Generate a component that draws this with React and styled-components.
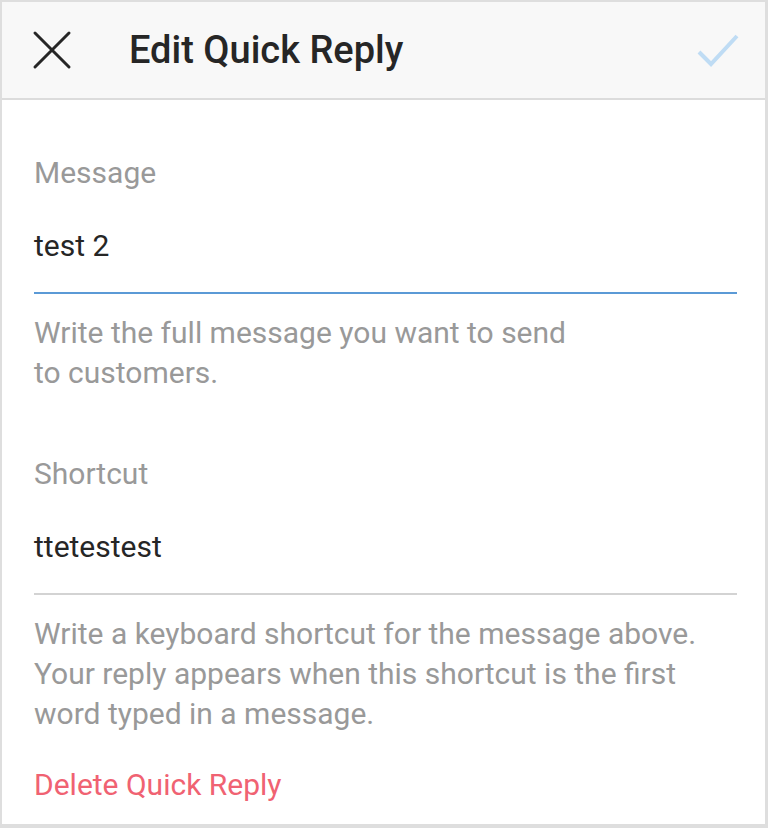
import * as React from 'react';
import styled, { createGlobalStyle } from 'styled-components';

const GlobalStyle = createGlobalStyle`
  html, body {
    margin: 0;
    padding: 0;
    background: #ffffff;
  }
  body {
    font-family: Roboto, 'Liberation Sans', sans-serif;
    -webkit-font-smoothing: antialiased;
  }
`;

const SScreen = styled.div`
  box-sizing: border-box;
  width: 768px;
  height: 828px;
  border: 2px solid #dedede;
  border-right-width: 3px;
  border-bottom-width: 4px;
  background: #ffffff;
  display: flex;
  flex-direction: column;
  overflow: hidden;
`;

const SHeader = styled.div`
  height: 96px;
  flex-shrink: 0;
  display: flex;
  align-items: center;
  background: #f8f8f8;
  border-bottom: 2px solid #dcdcdc;
  padding: 0 24px 0 30px;
`;

const SIconButton = styled.button`
  border: 0;
  background: none;
  padding: 0;
  display: flex;
  align-items: center;
  justify-content: center;
  width: ${({ size }) => size}px;
  height: ${({ size }) => size}px;
  cursor: pointer;
`;

const STitle = styled.h1`
  flex: 1;
  margin: 0 0 0 57px;
  font-size: 38px;
  font-weight: 500;
  color: #262626;
`;

const SBody = styled.div`
  padding: 0 28px 0 32px;
  display: flex;
  flex-direction: column;
`;

const SField = styled.div`
  display: flex;
  flex-direction: column;
  padding-top: ${({ first }) => (first ? 53 : 61)}px;
`;

const SLabel = styled.label`
  font-size: 30px;
  line-height: 40px;
  color: #999999;
`;

const SInput = styled.div`
  margin-top: 33px;
  font-size: 30px;
  line-height: 40px;
  color: #262626;
  padding-bottom: 26px;
  border-bottom: 2px solid ${({ focused }) => (focused ? '#5b9ad6' : '#d3d3d3')};
`;

const SHelp = styled.p`
  margin: 19px 0 0;
  font-size: 30px;
  line-height: 40px;
  color: #999999;
`;

const SDelete = styled.button`
  align-self: flex-start;
  margin-top: 31px;
  border: 0;
  background: none;
  padding: 0;
  font-family: inherit;
  font-size: 30px;
  line-height: 40px;
  color: #f06272;
  cursor: pointer;
`;

const CloseIcon = () => (
  <svg width="40" height="40" viewBox="0 0 40 40">
    <path
      d="M3 3 L37 37 M37 3 L3 37"
      stroke="#262626"
      strokeWidth="3"
      strokeLinecap="round"
      fill="none"
    />
  </svg>
);

const CheckIcon = () => (
  <svg width="48" height="40" viewBox="0 0 48 40">
    <path
      d="M6 22 L18 34 L44 6"
      stroke="#bfdcf4"
      strokeWidth="4"
      fill="none"
    />
  </svg>
);

const Field = ({ label, value, focused, first, children }) => (
  <SField first={first}>
    <SLabel>{label}</SLabel>
    <SInput focused={focused}>{value}</SInput>
    <SHelp>{children}</SHelp>
  </SField>
);

const App = () => (
  <>
    <GlobalStyle />
    <SScreen>
      <SHeader>
        <SIconButton size={40} aria-label="Close">
          <CloseIcon />
        </SIconButton>
        <STitle>Edit Quick Reply</STitle>
        <SIconButton size={48} aria-label="Save">
          <CheckIcon />
        </SIconButton>
      </SHeader>
      <SBody>
        <Field label="Message" value="test 2" focused first>
          Write the full message you want to send
          <br />
          to customers.
        </Field>
        <Field label="Shortcut" value="ttetestest">
          Write a keyboard shortcut for the message above.
          <br />
          Your reply appears when this shortcut is the first
          <br />
          word typed in a message.
        </Field>
        <SDelete>Delete Quick Reply</SDelete>
      </SBody>
    </SScreen>
  </>
);

export default App;
